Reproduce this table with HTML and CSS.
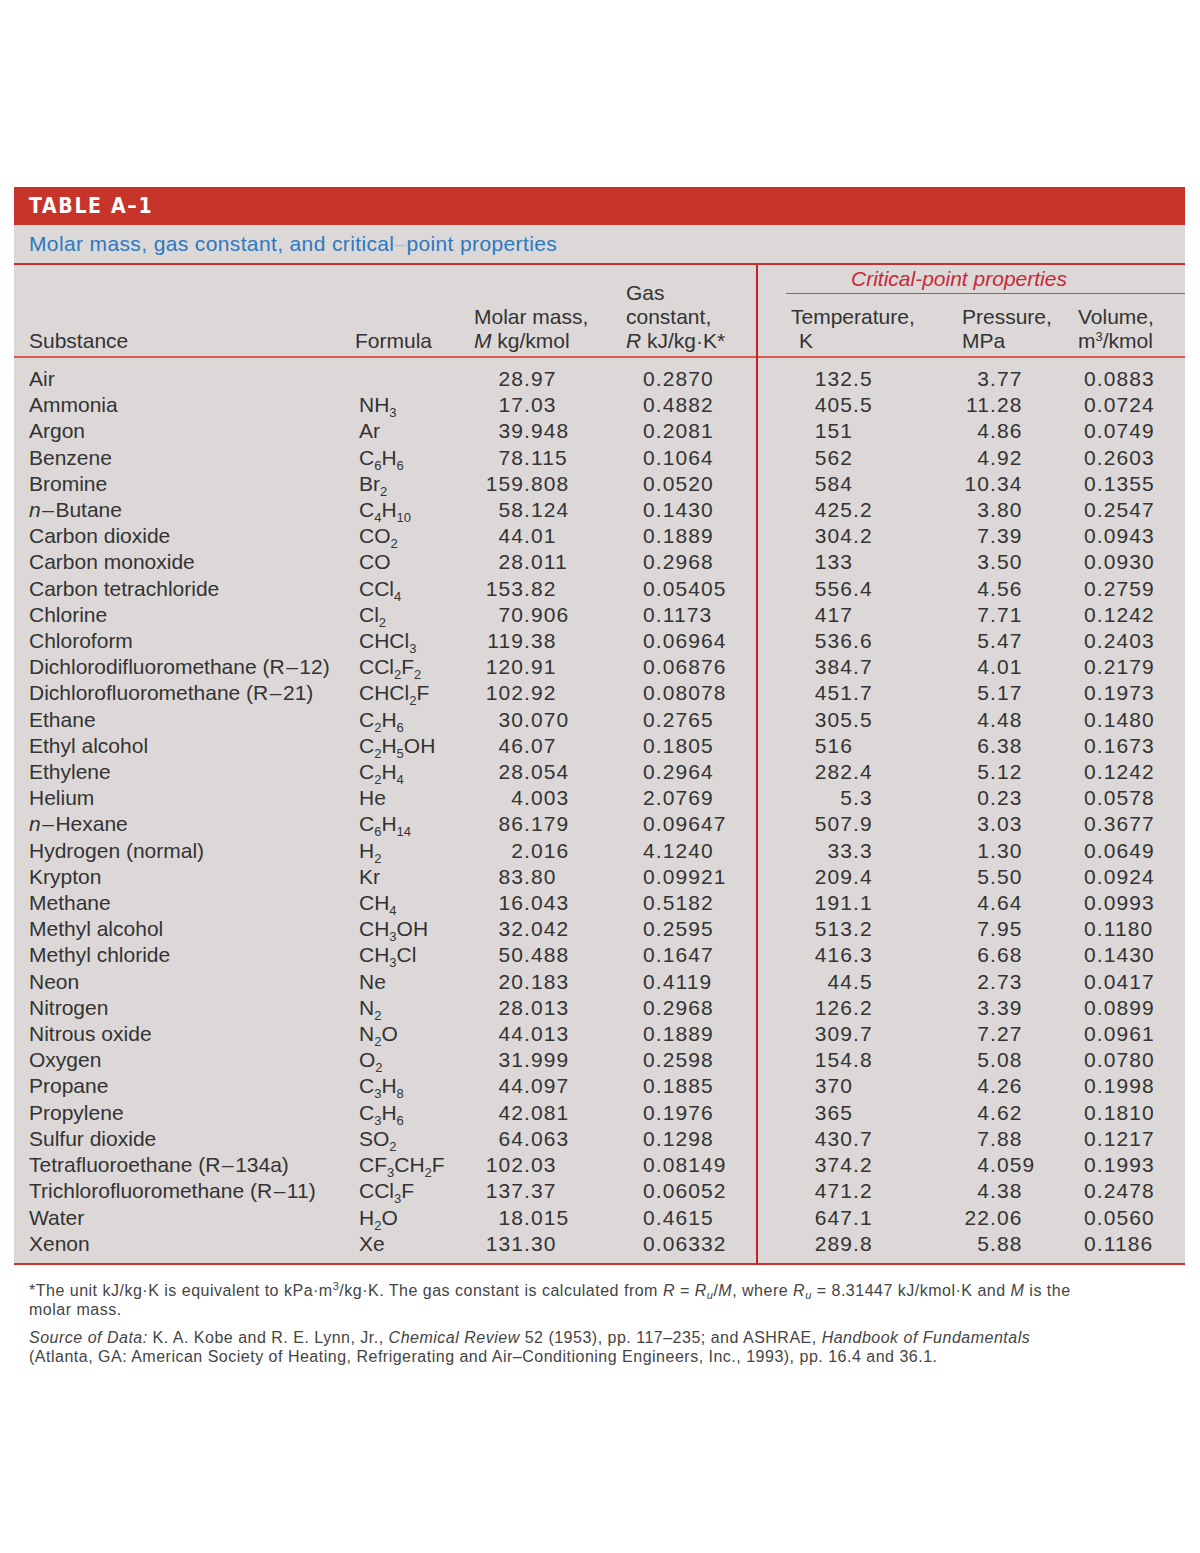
FILE: index.html
```html
<!DOCTYPE html>
<html lang="en">
<head>
<meta charset="utf-8">
<title>Table A-1</title>
<link rel="stylesheet" href="styles.css">
</head>
<body>
<div class="sheet">
  <div class="titlebar">TABLE A–1</div>
  <div class="subtitle">Molar mass, gas constant, and critical<span class="faint">–</span>point properties</div>
  <table class="data">
    <colgroup>
      <col class="c1"><col class="c2"><col class="c3"><col class="c4"><col class="c5"><col class="c6"><col class="c7">
    </colgroup>
    <thead>
      <tr class="h1">
        <th rowspan="2" class="s">Substance</th>
        <th rowspan="2" class="fh">Formula</th>
        <th rowspan="2" class="mh">Molar mass,<br><i>M</i> kg/kmol</th>
        <th rowspan="2" class="gh vr">Gas<br>constant,<br><i>R</i> kJ/kg·K*</th>
        <th colspan="3" class="crit"><div class="crit-in">Critical-point properties</div></th>
      </tr>
      <tr class="h2">
        <th class="th">Temperature,<br><span class="kk">K</span></th>
        <th class="ph">Pressure,<br>MPa</th>
        <th class="vh">Volume,<br>m<sup>3</sup>/kmol</th>
      </tr>
    </thead>
    <tbody>
      <tr class="first"><td class="s">Air</td><td class="f"></td><td class="m"><span class="i">28</span>.97</td><td class="g vr">0.2870</td><td class="t"><span class="i">132</span>.5</td><td class="p"><span class="i">3</span>.77</td><td class="v">0.0883</td></tr>
      <tr><td class="s">Ammonia</td><td class="f">NH<sub>3</sub></td><td class="m"><span class="i">17</span>.03</td><td class="g vr">0.4882</td><td class="t"><span class="i">405</span>.5</td><td class="p"><span class="i">11</span>.28</td><td class="v">0.0724</td></tr>
      <tr><td class="s">Argon</td><td class="f">Ar</td><td class="m"><span class="i">39</span>.948</td><td class="g vr">0.2081</td><td class="t"><span class="i">151</span></td><td class="p"><span class="i">4</span>.86</td><td class="v">0.0749</td></tr>
      <tr><td class="s">Benzene</td><td class="f">C<sub>6</sub>H<sub>6</sub></td><td class="m"><span class="i">78</span>.115</td><td class="g vr">0.1064</td><td class="t"><span class="i">562</span></td><td class="p"><span class="i">4</span>.92</td><td class="v">0.2603</td></tr>
      <tr><td class="s">Bromine</td><td class="f">Br<sub>2</sub></td><td class="m"><span class="i">159</span>.808</td><td class="g vr">0.0520</td><td class="t"><span class="i">584</span></td><td class="p"><span class="i">10</span>.34</td><td class="v">0.1355</td></tr>
      <tr><td class="s"><i>n</i><span class="dash">–</span>Butane</td><td class="f">C<sub>4</sub>H<sub>10</sub></td><td class="m"><span class="i">58</span>.124</td><td class="g vr">0.1430</td><td class="t"><span class="i">425</span>.2</td><td class="p"><span class="i">3</span>.80</td><td class="v">0.2547</td></tr>
      <tr><td class="s">Carbon dioxide</td><td class="f">CO<sub>2</sub></td><td class="m"><span class="i">44</span>.01</td><td class="g vr">0.1889</td><td class="t"><span class="i">304</span>.2</td><td class="p"><span class="i">7</span>.39</td><td class="v">0.0943</td></tr>
      <tr><td class="s">Carbon monoxide</td><td class="f">CO</td><td class="m"><span class="i">28</span>.011</td><td class="g vr">0.2968</td><td class="t"><span class="i">133</span></td><td class="p"><span class="i">3</span>.50</td><td class="v">0.0930</td></tr>
      <tr><td class="s">Carbon tetrachloride</td><td class="f">CCl<sub>4</sub></td><td class="m"><span class="i">153</span>.82</td><td class="g vr">0.05405</td><td class="t"><span class="i">556</span>.4</td><td class="p"><span class="i">4</span>.56</td><td class="v">0.2759</td></tr>
      <tr><td class="s">Chlorine</td><td class="f">Cl<sub>2</sub></td><td class="m"><span class="i">70</span>.906</td><td class="g vr">0.1173</td><td class="t"><span class="i">417</span></td><td class="p"><span class="i">7</span>.71</td><td class="v">0.1242</td></tr>
      <tr><td class="s">Chloroform</td><td class="f">CHCl<sub>3</sub></td><td class="m"><span class="i">119</span>.38</td><td class="g vr">0.06964</td><td class="t"><span class="i">536</span>.6</td><td class="p"><span class="i">5</span>.47</td><td class="v">0.2403</td></tr>
      <tr><td class="s">Dichlorodifluoromethane (R<span class="dash">–</span>12)</td><td class="f">CCl<sub>2</sub>F<sub>2</sub></td><td class="m"><span class="i">120</span>.91</td><td class="g vr">0.06876</td><td class="t"><span class="i">384</span>.7</td><td class="p"><span class="i">4</span>.01</td><td class="v">0.2179</td></tr>
      <tr><td class="s">Dichlorofluoromethane (R<span class="dash">–</span>21)</td><td class="f">CHCl<sub>2</sub>F</td><td class="m"><span class="i">102</span>.92</td><td class="g vr">0.08078</td><td class="t"><span class="i">451</span>.7</td><td class="p"><span class="i">5</span>.17</td><td class="v">0.1973</td></tr>
      <tr><td class="s">Ethane</td><td class="f">C<sub>2</sub>H<sub>6</sub></td><td class="m"><span class="i">30</span>.070</td><td class="g vr">0.2765</td><td class="t"><span class="i">305</span>.5</td><td class="p"><span class="i">4</span>.48</td><td class="v">0.1480</td></tr>
      <tr><td class="s">Ethyl alcohol</td><td class="f">C<sub>2</sub>H<sub>5</sub>OH</td><td class="m"><span class="i">46</span>.07</td><td class="g vr">0.1805</td><td class="t"><span class="i">516</span></td><td class="p"><span class="i">6</span>.38</td><td class="v">0.1673</td></tr>
      <tr><td class="s">Ethylene</td><td class="f">C<sub>2</sub>H<sub>4</sub></td><td class="m"><span class="i">28</span>.054</td><td class="g vr">0.2964</td><td class="t"><span class="i">282</span>.4</td><td class="p"><span class="i">5</span>.12</td><td class="v">0.1242</td></tr>
      <tr><td class="s">Helium</td><td class="f">He</td><td class="m"><span class="i">4</span>.003</td><td class="g vr">2.0769</td><td class="t"><span class="i">5</span>.3</td><td class="p"><span class="i">0</span>.23</td><td class="v">0.0578</td></tr>
      <tr><td class="s"><i>n</i><span class="dash">–</span>Hexane</td><td class="f">C<sub>6</sub>H<sub>14</sub></td><td class="m"><span class="i">86</span>.179</td><td class="g vr">0.09647</td><td class="t"><span class="i">507</span>.9</td><td class="p"><span class="i">3</span>.03</td><td class="v">0.3677</td></tr>
      <tr><td class="s">Hydrogen (normal)</td><td class="f">H<sub>2</sub></td><td class="m"><span class="i">2</span>.016</td><td class="g vr">4.1240</td><td class="t"><span class="i">33</span>.3</td><td class="p"><span class="i">1</span>.30</td><td class="v">0.0649</td></tr>
      <tr><td class="s">Krypton</td><td class="f">Kr</td><td class="m"><span class="i">83</span>.80</td><td class="g vr">0.09921</td><td class="t"><span class="i">209</span>.4</td><td class="p"><span class="i">5</span>.50</td><td class="v">0.0924</td></tr>
      <tr><td class="s">Methane</td><td class="f">CH<sub>4</sub></td><td class="m"><span class="i">16</span>.043</td><td class="g vr">0.5182</td><td class="t"><span class="i">191</span>.1</td><td class="p"><span class="i">4</span>.64</td><td class="v">0.0993</td></tr>
      <tr><td class="s">Methyl alcohol</td><td class="f">CH<sub>3</sub>OH</td><td class="m"><span class="i">32</span>.042</td><td class="g vr">0.2595</td><td class="t"><span class="i">513</span>.2</td><td class="p"><span class="i">7</span>.95</td><td class="v">0.1180</td></tr>
      <tr><td class="s">Methyl chloride</td><td class="f">CH<sub>3</sub>Cl</td><td class="m"><span class="i">50</span>.488</td><td class="g vr">0.1647</td><td class="t"><span class="i">416</span>.3</td><td class="p"><span class="i">6</span>.68</td><td class="v">0.1430</td></tr>
      <tr><td class="s">Neon</td><td class="f">Ne</td><td class="m"><span class="i">20</span>.183</td><td class="g vr">0.4119</td><td class="t"><span class="i">44</span>.5</td><td class="p"><span class="i">2</span>.73</td><td class="v">0.0417</td></tr>
      <tr><td class="s">Nitrogen</td><td class="f">N<sub>2</sub></td><td class="m"><span class="i">28</span>.013</td><td class="g vr">0.2968</td><td class="t"><span class="i">126</span>.2</td><td class="p"><span class="i">3</span>.39</td><td class="v">0.0899</td></tr>
      <tr><td class="s">Nitrous oxide</td><td class="f">N<sub>2</sub>O</td><td class="m"><span class="i">44</span>.013</td><td class="g vr">0.1889</td><td class="t"><span class="i">309</span>.7</td><td class="p"><span class="i">7</span>.27</td><td class="v">0.0961</td></tr>
      <tr><td class="s">Oxygen</td><td class="f">O<sub>2</sub></td><td class="m"><span class="i">31</span>.999</td><td class="g vr">0.2598</td><td class="t"><span class="i">154</span>.8</td><td class="p"><span class="i">5</span>.08</td><td class="v">0.0780</td></tr>
      <tr><td class="s">Propane</td><td class="f">C<sub>3</sub>H<sub>8</sub></td><td class="m"><span class="i">44</span>.097</td><td class="g vr">0.1885</td><td class="t"><span class="i">370</span></td><td class="p"><span class="i">4</span>.26</td><td class="v">0.1998</td></tr>
      <tr><td class="s">Propylene</td><td class="f">C<sub>3</sub>H<sub>6</sub></td><td class="m"><span class="i">42</span>.081</td><td class="g vr">0.1976</td><td class="t"><span class="i">365</span></td><td class="p"><span class="i">4</span>.62</td><td class="v">0.1810</td></tr>
      <tr><td class="s">Sulfur dioxide</td><td class="f">SO<sub>2</sub></td><td class="m"><span class="i">64</span>.063</td><td class="g vr">0.1298</td><td class="t"><span class="i">430</span>.7</td><td class="p"><span class="i">7</span>.88</td><td class="v">0.1217</td></tr>
      <tr><td class="s">Tetrafluoroethane (R<span class="dash">–</span>134a)</td><td class="f">CF<sub>3</sub>CH<sub>2</sub>F</td><td class="m"><span class="i">102</span>.03</td><td class="g vr">0.08149</td><td class="t"><span class="i">374</span>.2</td><td class="p"><span class="i">4</span>.059</td><td class="v">0.1993</td></tr>
      <tr><td class="s">Trichlorofluoromethane (R<span class="dash">–</span>11)</td><td class="f">CCl<sub>3</sub>F</td><td class="m"><span class="i">137</span>.37</td><td class="g vr">0.06052</td><td class="t"><span class="i">471</span>.2</td><td class="p"><span class="i">4</span>.38</td><td class="v">0.2478</td></tr>
      <tr><td class="s">Water</td><td class="f">H<sub>2</sub>O</td><td class="m"><span class="i">18</span>.015</td><td class="g vr">0.4615</td><td class="t"><span class="i">647</span>.1</td><td class="p"><span class="i">22</span>.06</td><td class="v">0.0560</td></tr>
      <tr class="last"><td class="s">Xenon</td><td class="f">Xe</td><td class="m"><span class="i">131</span>.30</td><td class="g vr">0.06332</td><td class="t"><span class="i">289</span>.8</td><td class="p"><span class="i">5</span>.88</td><td class="v">0.1186</td></tr>
    </tbody>
  </table>
  <div class="notes">
    <p>*The unit kJ/kg·K is equivalent to kPa·m<sup>3</sup>/kg·K. The gas constant is calculated from <i>R</i> = <i>R<sub>u</sub></i>/<i>M</i>, where <i>R<sub>u</sub></i> = 8.31447 kJ/kmol·K and <i>M</i> is the<br>molar mass.</p>
    <p class="src"><i>Source of Data:</i> K. A. Kobe and R. E. Lynn, Jr., <i>Chemical Review</i> 52 (1953), pp. 117–235; and ASHRAE, <i>Handbook of Fundamentals</i><br>(Atlanta, GA: American Society of Heating, Refrigerating and Air–Conditioning Engineers, Inc., 1993), pp. 16.4 and 36.1.</p>
  </div>
</div>
</body>
</html>
```

FILE: styles.css
```css
html, body {
  margin: 0;
  padding: 0;
  background: #ffffff;
}
body {
  font-family: "Liberation Sans", Arial, sans-serif;
  color: #333333;
}
.sheet {
  width: 1171px;
  margin: 187px 0 0 14px;
}
.titlebar {
  box-sizing: border-box;
  height: 38px;
  background: #c6342a;
  color: #ffffff;
  display: flex;
  align-items: center;
  padding-left: 15px;
  font-family: "DejaVu Sans Condensed", "DejaVu Sans", sans-serif;
  font-stretch: condensed;
  font-weight: bold;
  font-size: 21px;
  letter-spacing: 1.7px;
}
.subtitle {
  box-sizing: border-box;
  height: 40px;
  background: #dcd8d7;
  color: #2b78c2;
  font-size: 21px;
  letter-spacing: 0.37px;
  display: flex;
  align-items: center;
  padding-left: 15px;
  border-bottom: 2px solid #c8302a;
}
.faint {
  opacity: 0.25;
}
.data {
  width: 1171px;
  border-collapse: collapse;
  table-layout: fixed;
  background: #dcd8d7;
  border-bottom: 2px solid #d8302b;
  font-size: 21px;
}
.c1 { width: 341px; }
.c2 { width: 115px; }
.c3 { width: 152px; }
.c4 { width: 135px; }
.c5 { width: 198px; }
.c6 { width: 117px; }
.c7 { width: 113px; }

.data thead {
  border-bottom: 2px solid #dc5a54;
}
.data th {
  font-weight: normal;
  text-align: left;
  vertical-align: bottom;
  line-height: 24px;
  padding: 0 0 3px 0;
  white-space: nowrap;
}
.data th.s { padding-left: 15px; }
.data th.fh { padding-left: 0; }
.data th.mh { padding-left: 4px; }
.data th.gh { padding-left: 4px; }
.data .vr { border-right: 2px solid #c8202a; }
.data th.crit {
  padding: 3px 0 0 0;
  vertical-align: top;
}
.crit-in {
  margin-left: 28px;
  padding: 0 0 3px 65px;
  border-bottom: 1px solid #cf4a48;
  line-height: 22px;
  color: #c9283a;
  font-style: italic;
}
.data .h2 th {
  padding-top: 11px;
  padding-bottom: 3px;
}
.data th.th { padding-left: 33px; }
.data th.ph { padding-left: 7px; }
.data th.vh { padding-left: 6px; }
.kk { margin-left: 8px; }
sup {
  font-size: 13px;
  vertical-align: 7px;
  line-height: 0;
}

.data td {
  padding: 0;
  line-height: 26.2px;
  white-space: nowrap;
}
.data tr.first td { padding-top: 8px; }
.data tr.last td { padding-bottom: 6px; }
.data td.s { padding-left: 15px; }
.data td.f { padding-left: 4px; }
.dash { margin: 0 1.5px; }
.data td.m, .data td.g, .data td.t, .data td.p, .data td.v {
  letter-spacing: 1.1px;
}
.data td.g { padding-left: 21px; }
.data td.v { padding-left: 12px; }
.i {
  display: inline-block;
  text-align: right;
}
.m .i { width: 54px; }
.t .i { width: 95px; }
.p .i { width: 35px; }
sub {
  font-size: 13px;
  vertical-align: -5px;
  line-height: 0;
}

.notes {
  padding-left: 15px;
  margin-top: 16px;
  font-size: 16px;
  line-height: 19px;
  letter-spacing: 0.5px;
  color: #444444;
}
.notes p {
  margin: 0;
}
.notes p.src {
  margin-top: 9px;
}
.notes sub {
  font-size: 11px;
  vertical-align: -3px;
}
.notes sup {
  font-size: 11px;
  vertical-align: 6px;
}
```
